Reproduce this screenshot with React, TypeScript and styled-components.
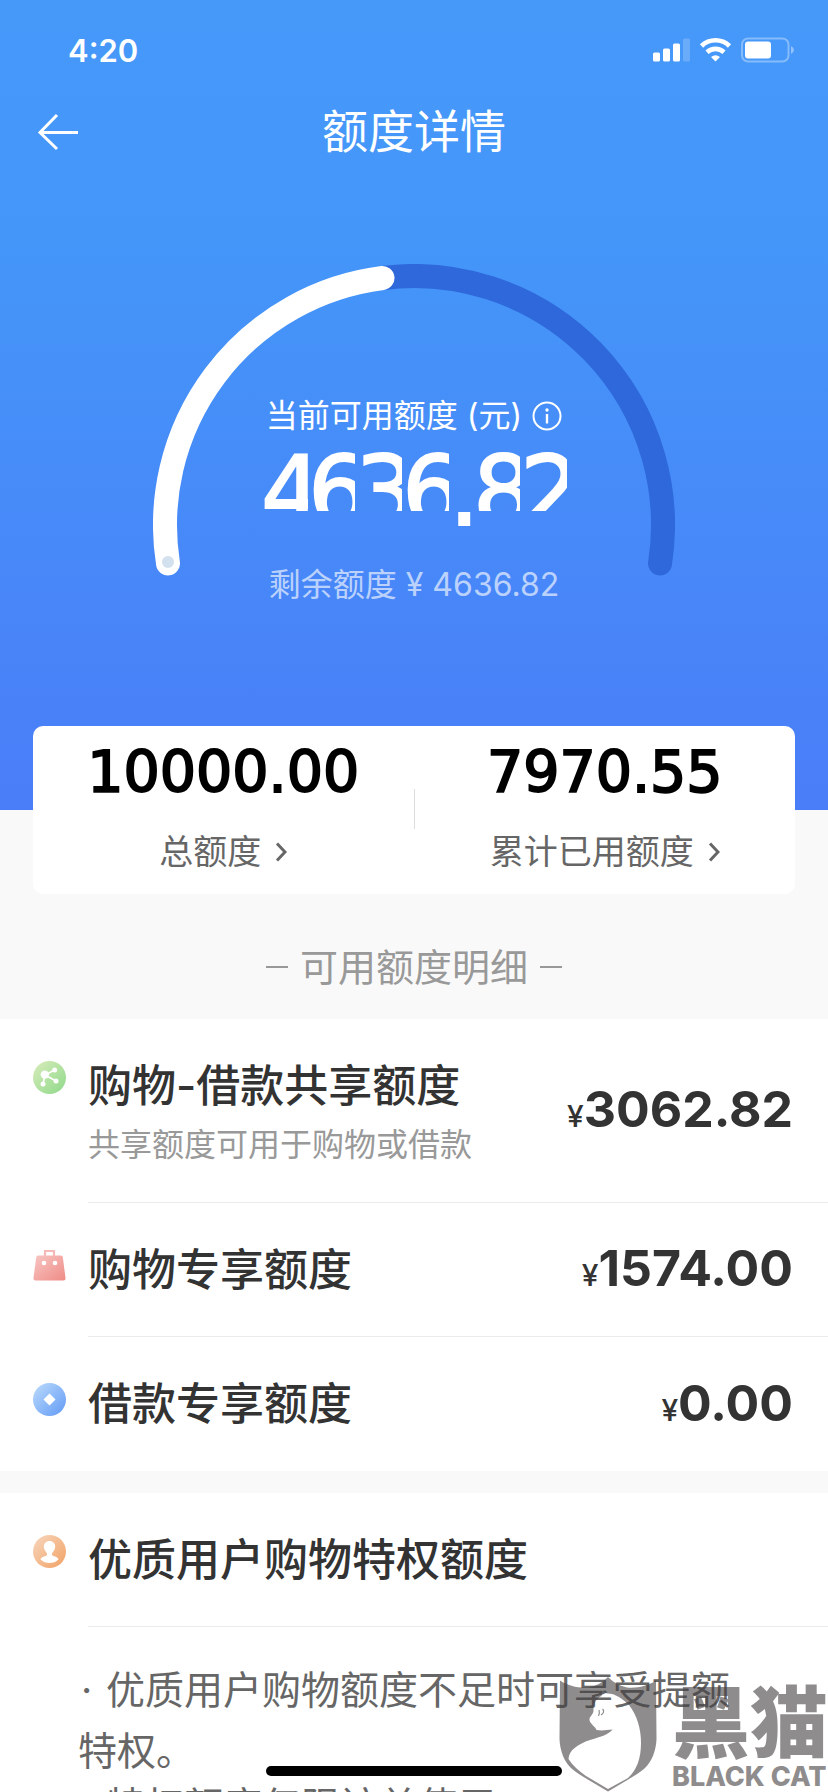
import type { ReactNode } from "react";
import styled, { createGlobalStyle } from "styled-components";

const privileges = [
  "优质用户购物额度不足时可享受提额特权。",
  "特权额度仅限该单使用",
];

const ShareIcon = () => (
  <svg width="33" height="33" viewBox="0 0 33 33" aria-hidden="true">
    <defs>
      <linearGradient id="share" x1="0" y1="0" x2="1" y2="1">
        <stop offset="0" stopColor="#d9ecbb" />
        <stop offset="1" stopColor="#8ed98a" />
      </linearGradient>
    </defs>
    <circle cx="16.5" cy="16.5" r="16.5" fill="url(#share)" />
    <path
      d="M21.5 9L12 14L23 20M12 14L10 23"
      fill="none"
      stroke="#fff"
      strokeWidth="1.6"
    />
    <circle cx="11.8" cy="13.6" r="4.2" fill="#fff" />
    <circle cx="21.6" cy="9" r="2.5" fill="#fff" />
    <circle cx="23" cy="20" r="2.5" fill="#fff" />
    <circle cx="10" cy="23" r="2.5" fill="#fff" />
  </svg>
);

const BagIcon = () => (
  <svg width="33" height="33" viewBox="0 0 33 33" aria-hidden="true">
    <defs>
      <linearGradient id="bag" x1="0" y1="0" x2="1" y2="1">
        <stop offset="0" stopColor="#f8c6c4" />
        <stop offset="1" stopColor="#ef8c86" />
      </linearGradient>
    </defs>
    <path d="M12 7V2H21V7" fill="none" stroke="#f5bab7" strokeWidth="2.2" />
    <path
      d="M5 6.500H28Q29.500 6.500 29.800 8L32.500 29Q32.700 31.500 30.500 31.500H2.500Q.3 31.500 .5 29L3.200 8Q3.500 6.500 5 6.500Z"
      fill="url(#bag)"
    />
    <circle cx="11" cy="14" r="2.3" fill="#fff" />
    <circle cx="22" cy="14" r="2.3" fill="#fff" />
  </svg>
);

const LoanIcon = () => (
  <svg width="33" height="33" viewBox="0 0 33 33" aria-hidden="true">
    <defs>
      <linearGradient id="loan" x1="0" y1="0" x2="1" y2="1">
        <stop offset="0" stopColor="#bddcfb" />
        <stop offset="1" stopColor="#6199f6" />
      </linearGradient>
    </defs>
    <circle cx="16.5" cy="16.5" r="16.5" fill="url(#loan)" />
    <path d="M16.500 10.500L22.500 16.500L16.500 22.500L10.500 16.500Z" fill="#fff" />
  </svg>
);

const UserIcon = () => (
  <svg width="33" height="33" viewBox="0 0 33 33" aria-hidden="true">
    <defs>
      <linearGradient id="user" x1="0" y1="0" x2="1" y2="1">
        <stop offset="0" stopColor="#f7d7bf" />
        <stop offset="1" stopColor="#f2a163" />
      </linearGradient>
    </defs>
    <circle cx="16.5" cy="16.5" r="16.5" fill="url(#user)" />
    <path
      d="M16.500 6C20 6 22.200 8.500 22.200 11.500C22.200 14.500 20.500 16 19 18.500C18.500 20.500 20 21 22 21.500C24 22.200 25 23 25.500 24.500C23 27 20 28 16.500 28C13 28 10 27 7.500 24.500C8 23 9 22.200 11 21.500C13 21 14.500 20.500 14 18.500C12.500 16 10.800 14.500 10.800 11.500C10.800 8.500 13 6 16.500 6Z"
      fill="#fff"
    />
  </svg>
);

const Chevron = () => (
  <svg width="12" height="20" viewBox="0 0 12 20" aria-hidden="true">
    <path d="M2 1.500L10 10L2 18.500" fill="none" stroke="#666" strokeWidth="3" />
  </svg>
);

type QuotaRowProps = {
  icon: ReactNode;
  iconTop: number;
  title: string;
  note?: string;
  amount?: string;
};

const QuotaRow = ({ icon, iconTop, title, note, amount }: QuotaRowProps) => (
  <Row>
    <RowIcon $top={iconTop}>{icon}</RowIcon>
    <RowBody>
      <div>
        <RowTitle>{title}</RowTitle>
        {note && <RowNote>{note}</RowNote>}
      </div>
      {amount && (
        <Amount>
          <small>¥</small>
          {amount}
        </Amount>
      )}
    </RowBody>
  </Row>
);

const App = () => {
  return (
    <Page>
      <GlobalStyle />
      <Hero>
        <StatusBar>
          <span>4:20</span>
          <svg width="142" height="26" viewBox="0 0 142 26" aria-hidden="true">
            <g fill="#fff">
              <rect x="0" y="15.500" width="7" height="9" rx="1.5" />
              <rect x="10" y="11.500" width="7" height="13" rx="1.5" />
              <rect x="20" y="6.500" width="7" height="18" rx="1.5" />
              <rect x="30" y="1.500" width="7" height="23" rx="1.5" opacity=".2" />
            </g>
            <g fill="none" stroke="#fff" strokeWidth="4.6">
              <path d="M48.500 9A20 20 0 0 1 76.500 9" />
              <path d="M54 15.200A12.500 12.500 0 0 1 71 15.200" />
            </g>
            <path d="M62.500 24.500L58 20Q62.500 16.500 67 20Z" fill="#fff" />
            <rect
              x="89"
              y="1.500"
              width="46.500"
              height="23"
              rx="6"
              fill="none"
              stroke="#fff"
              strokeOpacity=".35"
              strokeWidth="2"
            />
            <rect x="92" y="4.500" width="26" height="17" rx="3" fill="#fff" />
            <path d="M138 9Q141 10.500 141 13T138 17Z" fill="#fff" opacity=".4" />
          </svg>
        </StatusBar>
        <NavBar>
          <BackButton type="button" aria-label="返回">
            <svg width="44" height="40" viewBox="0 0 44 40">
              <path
                d="M22 3L5 20.500L22 37M5 20.500H43"
                fill="none"
                stroke="#fff"
                strokeWidth="3"
              />
            </svg>
          </BackButton>
          <NavTitle>额度详情</NavTitle>
        </NavBar>
        <Gauge>
          <svg width="522" height="312" viewBox="0 0 522 312" aria-hidden="true">
            <g fill="none" strokeWidth="24" strokeLinecap="round">
              <path d="M229.500 14A249 249 0 0 1 507 299.500" stroke="#2e68da" />
              <path d="M15 299.500A249 249 0 0 1 229.500 14" stroke="#fff" />
            </g>
            <circle cx="15" cy="298" r="6" fill="#d3e1ef" />
          </svg>
          <GaugeText>
            <GaugeLabel>
              当前可用额度 (元)
              <InfoButton type="button" aria-label="说明">
                <svg width="30" height="30" viewBox="0 0 30 30">
                  <circle
                    cx="15"
                    cy="15"
                    r="13.5"
                    fill="none"
                    stroke="#fff"
                    strokeWidth="2"
                  />
                  <circle cx="15" cy="9" r="1.7" fill="#fff" />
                  <path d="M15 13V22.500" stroke="#fff" strokeWidth="2.4" />
                </svg>
              </InfoButton>
            </GaugeLabel>
            <Ticker>
              {"4636.82".split("").map((char, i) =>
                char === "." ? (
                  <TickerDot key={i}>{char}</TickerDot>
                ) : (
                  <TickerDigit key={i}>{char}</TickerDigit>
                )
              )}
            </Ticker>
            <GaugeRest>剩余额度 ¥ 4636.82</GaugeRest>
          </GaugeText>
        </Gauge>
      </Hero>

      <Summary>
        <SummaryItem href="#total">
          <SummaryValue>10000.00</SummaryValue>
          <SummaryLabel>
            总额度
            <Chevron />
          </SummaryLabel>
        </SummaryItem>
        <SummaryDivider />
        <SummaryItem href="#used">
          <SummaryValue>7970.55</SummaryValue>
          <SummaryLabel>
            累计已用额度
            <Chevron />
          </SummaryLabel>
        </SummaryItem>
      </Summary>

      <SectionTitle>可用额度明细</SectionTitle>

      <List>
        <QuotaRow
          icon={<ShareIcon />}
          iconTop={42}
          title="购物-借款共享额度"
          note="共享额度可用于购物或借款"
          amount="3062.82"
        />
        <QuotaRow
          icon={<BagIcon />}
          iconTop={46}
          title="购物专享额度"
          amount="1574.00"
        />
        <QuotaRow
          icon={<LoanIcon />}
          iconTop={46}
          title="借款专享额度"
          amount="0.00"
        />
      </List>

      <Privilege>
        <QuotaRow
          icon={<UserIcon />}
          iconTop={42}
          title="优质用户购物特权额度"
        />
      </Privilege>
      <Notes>
        {privileges.map((text) => (
          <Note key={text}>
            <Bullet>·</Bullet>
            {text}
          </Note>
        ))}
      </Notes>

      <HomeIndicator />
      <Watermark>
        <svg width="98" height="115" viewBox="0 0 98 115" aria-hidden="true">
          <path
            fillRule="evenodd"
            fill="currentColor"
            d="M49 0C43 6 37 9 30 10.500C20 11.500 9 9 1 3.500L.5 62C1 74 5 84 12 91C17 96 25 100 33 105L49 114.500L65 105C73 100 81 96 86 91C93 84 97 74 97.500 62L97 3.500C89 9 78 11.500 68 10.500C61 9 55 6 49 0ZM43.500 13.500L48 16.500C55 16 63 21 70 28C78 38 82 52 82 66C82 81 78 93 69 101L49 112L27 99C20 94 14 89 9.500 82C10 73 19 67 31 63C41 60 49 58 53.500 52.500C48 53 43 54 37.500 53C36 49 31 47 30.500 43C30 40 34 38 34.500 34C34 26 38 21 42.500 19Z"
          />
          <path
            d="M40 33C41 36 40 38 39.500 39M43.500 32C46 34 44 37 42 38"
            fill="none"
            stroke="currentColor"
            strokeWidth="1.2"
          />
        </svg>
        <WatermarkText>
          <strong>黑猫</strong>
          <span>BLACK CAT</span>
        </WatermarkText>
      </Watermark>
    </Page>
  );
};

export default App;

const GlobalStyle = createGlobalStyle`
  * {
    box-sizing: border-box;
  }

  body,
  h1,
  h2,
  h3,
  p,
  ul {
    margin: 0;
    padding: 0;
  }

  body {
    font-family: Inter, "Noto Sans CJK SC", sans-serif;
    background-color: #fff;
    color: #333;
  }

  svg {
    display: block;
    flex-shrink: 0;
  }

  button {
    padding: 0;
    border: none;
    background: none;
  }

  a {
    color: inherit;
    text-decoration: none;
  }
`;

const Page = styled.div`
  position: relative;
  height: 100vh;
  overflow: hidden;
  background-color: #fff;
`;

const Hero = styled.header`
  display: flex;
  flex-direction: column;
  padding-bottom: 201px;
  background: linear-gradient(#4698f9 0%, #4496f9 30%, #4a7df8 100%);
  color: #fff;
`;

const StatusBar = styled.div`
  display: flex;
  align-items: center;
  justify-content: space-between;
  padding: 12px 33px 0 68px;
  height: 88px;
  font-size: 31px;
  font-weight: 600;
`;

const NavBar = styled.nav`
  display: grid;
  grid-template-columns: 1fr auto 1fr;
  align-items: center;
  height: 88px;
  padding: 0 35px;
`;

const BackButton = styled.button`
  justify-self: start;
`;

const NavTitle = styled.h1`
  padding-bottom: 2px;
  font-size: 46px;
  line-height: 64px;
  font-weight: 400;
`;

const Gauge = styled.section`
  display: grid;
  justify-items: center;
  margin-top: 88px;

  > * {
    grid-area: 1 / 1;
  }
`;

const GaugeText = styled.div`
  display: flex;
  flex-direction: column;
  align-items: center;
  padding-top: 128px;
  font-size: 32px;
  line-height: 48px;
`;

const GaugeLabel = styled.div`
  display: flex;
  align-items: center;
  gap: 10px;
`;

const InfoButton = styled.button`
  display: flex;
`;

const Ticker = styled.div`
  display: flex;
  margin: 4px 0 21px;
  height: 96px;
  font-family: "DejaVu Sans", sans-serif;
  font-size: 96px;
  line-height: 96px;
  -webkit-text-stroke: 2px #fff;
`;

const TickerDigit = styled.span`
  width: 47px;
  height: 67px;
  overflow: hidden;
`;

const TickerDot = styled.span`
  width: 24px;
`;

const GaugeRest = styled.div`
  color: rgba(255, 255, 255, 0.64);
`;

const Summary = styled.section`
  position: relative;
  display: flex;
  align-items: center;
  margin: -84px 33px 0;
  padding: 16px 0 18px;
  border-radius: 10px;
  background-color: #fff;
`;

const SummaryItem = styled.a`
  flex: 1;
  display: flex;
  flex-direction: column;
  align-items: center;
  gap: 26px;
`;

const SummaryValue = styled.div`
  font-family: "DejaVu Sans", sans-serif;
  font-size: 57px;
  line-height: 60px;
  color: #000;
  -webkit-text-stroke: 2px #000;
`;

const SummaryLabel = styled.div`
  display: flex;
  align-items: center;
  gap: 14px;
  font-size: 34px;
  line-height: 48px;
  color: #666;
`;

const SummaryDivider = styled.div`
  width: 1px;
  height: 40px;
  background-color: #ddd;
`;

const SectionTitle = styled.h2`
  display: flex;
  align-items: center;
  justify-content: center;
  gap: 12px;
  margin-top: -84px;
  padding: 125px 0 20px;
  background-color: #f9f9f9;
  font-size: 38px;
  line-height: 64px;
  font-weight: 400;
  color: #999;

  &::before,
  &::after {
    content: "";
    width: 22px;
    height: 2px;
    background-color: #999;
  }
`;

const List = styled.ul`
  list-style: none;
  background-color: #fff;
`;

const Privilege = styled(List)`
  border-top: 22px solid #f9f9f9;
`;

const Row = styled.li`
  display: flex;
  gap: 22px;
  padding-left: 33px;
`;

const RowIcon = styled.div<{ $top: number }>`
  padding-top: ${({ $top }) => $top}px;
`;

const RowBody = styled.div`
  flex: 1;
  display: flex;
  justify-content: space-between;
  min-height: 134px;
  padding: 42px 35px 35px 0;
  border-bottom: 1px solid #ebebeb;

  ${List} > ${Row}:nth-child(3) & {
    border-bottom: none;
  }
`;

const RowTitle = styled.h3`
  font-size: 44px;
  line-height: 50px;
  font-weight: 500;
`;

const RowNote = styled.p`
  margin-top: 12px;
  font-size: 32px;
  line-height: 44px;
  color: #999;
`;

const Amount = styled.div`
  align-self: center;
  margin-bottom: 10px;
  font-size: 50px;
  line-height: 46px;
  font-weight: 700;

  small {
    font-size: 30px;
    line-height: 1;
    font-weight: 500;
  }
`;

const Notes = styled.div`
  padding: 32px 78px 0;
  font-size: 39px;
  line-height: 61px;
  color: #666;
`;

const Note = styled.p`
  margin-bottom: -6px;
`;

const Bullet = styled.span`
  display: inline-block;
  width: 28px;
  padding-left: 3px;
`;

const HomeIndicator = styled.div`
  position: absolute;
  bottom: 16px;
  left: 50%;
  margin-left: -148px;
  width: 296px;
  height: 10px;
  border-radius: 5px;
  background-color: #000;
`;

const Watermark = styled.div`
  position: absolute;
  right: 0;
  bottom: 0;
  display: flex;
  gap: 15px;
  color: #454042;
  opacity: 0.6;
`;

const WatermarkText = styled.div`
  display: flex;
  flex-direction: column;
  justify-content: flex-end;
  padding-bottom: 1px;
  white-space: nowrap;

  strong {
    font-size: 78px;
    line-height: 78px;
    font-weight: 900;
  }

  span {
    font-size: 27px;
    line-height: 28px;
    font-weight: 800;
  }
`;
